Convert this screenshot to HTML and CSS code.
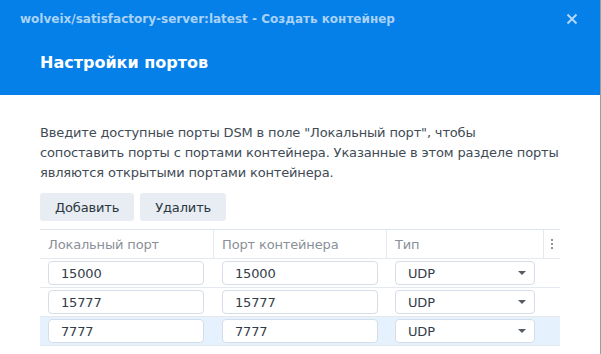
FILE: index.html
```html
<!DOCTYPE html>
<html lang="ru">
<head>
<meta charset="utf-8">
<title>Настройки портов</title>
<link rel="stylesheet" href="styles.css">
</head>
<body>
<div class="dialog">
  <div class="header">
    <div class="titlebar">
      <span class="title">wolveix/satisfactory-server:latest - Создать контейнер</span>
      <svg class="close" width="12" height="12" viewBox="0 0 12 12"><path d="M1.5 1.5 L10.5 10.5 M10.5 1.5 L1.5 10.5" stroke="#b2d7f8" stroke-width="2" fill="none"/></svg>
    </div>
    <div class="subtitle">Настройки портов</div>
  </div>
  <div class="content">
    <p class="desc">Введите доступные порты DSM в поле "Локальный порт", чтобы сопоставить порты с портами контейнера. Указанные в этом разделе порты являются открытыми портами контейнера.</p>
    <div class="toolbar">
      <button class="btn">Добавить</button>
      <button class="btn">Удалить</button>
    </div>
    <div class="grid">
      <div class="row head">
        <div class="hcell">Локальный порт</div>
        <div class="hcell">Порт контейнера</div>
        <div class="hcell">Тип</div>
        <div class="hcell menu"><span class="dots"><i></i><i></i><i></i></span></div>
      </div>
      <div class="row">
        <div class="cell"><div class="field">15000</div></div>
        <div class="cell"><div class="field">15000</div></div>
        <div class="cell"><div class="field select">UDP<span class="caret"></span></div></div>
        <div class="cell"></div>
      </div>
      <div class="row">
        <div class="cell"><div class="field">15777</div></div>
        <div class="cell"><div class="field">15777</div></div>
        <div class="cell"><div class="field select">UDP<span class="caret"></span></div></div>
        <div class="cell"></div>
      </div>
      <div class="row selected">
        <div class="cell"><div class="field">7777</div></div>
        <div class="cell"><div class="field">7777</div></div>
        <div class="cell"><div class="field select">UDP<span class="caret"></span></div></div>
        <div class="cell"></div>
      </div>
    </div>
  </div>
</div>
</body>
</html>
```

FILE: styles.css
```css
html, body {
  margin: 0;
  padding: 0;
  background: #ffffff;
}
body {
  font-family: "DejaVu Sans", Verdana, sans-serif;
  font-size: 13px;
  letter-spacing: -0.15px;
  color: #414b55;
}
.dialog {
  width: 600px;
  height: 354px;
  border-right: 1px solid #9e9e9e;
  overflow: hidden;
  background: #fff;
}
.header {
  background: #0580e8;
  height: 95px;
  box-sizing: border-box;
  padding: 0 20px;
}
.titlebar {
  height: 38px;
  display: flex;
  align-items: center;
  justify-content: space-between;
}
.title {
  color: #a9d2f7;
  font-weight: bold;
  font-size: 12px;
  letter-spacing: 0;
}
.close {
  margin-right: 2px;
  display: block;
}
.subtitle {
  color: #ffffff;
  font-weight: bold;
  font-size: 16px;
  letter-spacing: 0;
  padding-left: 20px;
  line-height: 26px;
  margin-top: 12px;
}
.content {
  padding: 28px 40px 0 40px;
}
.desc {
  margin: 0;
  line-height: 20px;
  width: 520px;
}
.toolbar {
  display: flex;
  gap: 6px;
  margin-top: 10px;
}
.btn {
  font-family: inherit;
  font-size: 13px;
  letter-spacing: -0.15px;
  color: #2b3640;
  background: #e8edf3;
  border: none;
  border-radius: 3px;
  height: 28px;
  padding: 0 15px;
}
.grid {
  margin-top: 8px;
  width: 520px;
  border-top: 1px solid #dde4eb;
}
.row {
  display: grid;
  grid-template-columns: 174px 173px 157px 16px;
  height: 28px;
  border-bottom: 1px solid #e3e9ef;
}
.row.selected {
  background: #e5f1fc;
}
.hcell {
  color: #8a9099;
  display: flex;
  align-items: center;
  padding-left: 8px;
  border-right: 1px solid #e3e9ef;
  box-sizing: border-box;
}
.hcell.menu {
  border-right: none;
  padding-left: 0;
  justify-content: center;
}
.dots {
  display: flex;
  flex-direction: column;
  gap: 2px;
}
.dots i {
  display: block;
  width: 2px;
  height: 2px;
  background: #8f959c;
}
.cell {
  display: flex;
  align-items: center;
  padding-left: 8px;
}
.field {
  box-sizing: border-box;
  width: 156px;
  height: 24px;
  border: 1px solid #d5dee8;
  border-radius: 4px;
  background: #fff;
  padding-left: 12px;
  display: flex;
  align-items: center;
  color: #333d47;
}
.field.select {
  width: 140px;
  padding-left: 12px;
  justify-content: space-between;
  padding-right: 8px;
}
.caret {
  width: 0;
  height: 0;
  border-left: 4px solid transparent;
  border-right: 4px solid transparent;
  border-top: 4px solid #555c64;
}
```
